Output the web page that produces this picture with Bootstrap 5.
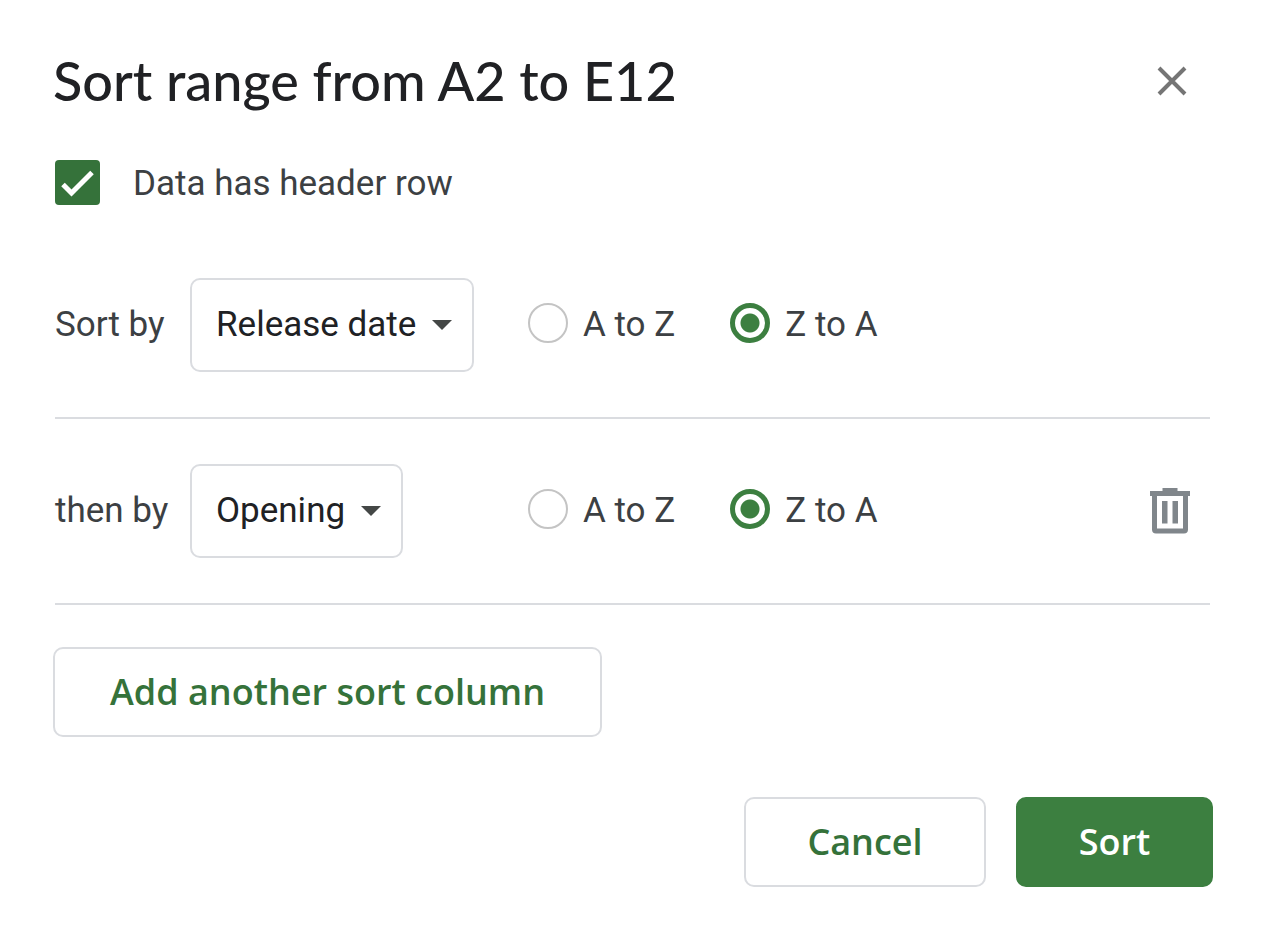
<!DOCTYPE html>
<html lang="en">
<head>
<meta charset="utf-8">
<meta name="viewport" content="width=device-width, initial-scale=1">
<title>Sort range</title>
<link rel="stylesheet" href="https://cdn.jsdelivr.net/npm/bootstrap@5.3.0/dist/css/bootstrap.min.css">
<style>
  :root { --green: #3c7f40; --green-text: #35723a; --line: #dadce0; --ink: #202124; --ink-soft: #3c4043; }
  body { background: #fff; color: var(--ink-soft); font-family: Roboto, sans-serif; font-size: 35px; line-height: 44px; }
  .sort-dialog { padding: 47px 51px 48px 53px; }
  .sort-title { font-family: Lato, sans-serif; font-size: 54px; line-height: 68px; font-weight: 500; color: var(--ink); }
  .icon-btn { padding: 0; border: 0; background: none; line-height: 0; }
  .close-btn { margin-right: 26px; }
  .inset { margin-left: 2px; margin-right: 3px; }
  .header-check { margin-top: 43px; margin-bottom: 27px; gap: 33px; }
  .form-check-input { margin: 0; flex: none; background-color: #fff; }
  .form-check-input + label { padding-top: 4px; }
  .header-check .form-check-input { width: 45px; height: 45px; border: 0; border-radius: 4px; }
  .header-check .form-check-input:checked {
    background-color: var(--green-text);
    background-size: 45px 45px;
    background-image: url("data:image/svg+xml,%3csvg xmlns='http://www.w3.org/2000/svg' viewBox='0 0 45 45'%3e%3cpath fill='none' stroke='%23fff' stroke-width='5' d='M8 24.500l8.500 8.500L37 12.500'/%3e%3c/svg%3e");
  }
  .sort-row { padding: 45px 0; border-bottom: 2px solid var(--line); }
  .row-label { width: 135px; }
  .select-cell { width: 338px; }
  .sort-select {
    height: 94px; padding: 0 20px 0 24px; border: 2px solid var(--line); border-radius: 10px;
    color: var(--ink); font-size: 35px; line-height: 44px;
    background-image: url("data:image/svg+xml,%3csvg xmlns='http://www.w3.org/2000/svg' viewBox='0 0 20 10'%3e%3cpath fill='%23444746' d='M0 0h20L10 10z'/%3e%3c/svg%3e");
    background-size: 20px 10px; background-position: right 20px center;
  }
  .select-wide { width: 284px; }
  .select-narrow { width: 213px; }
  .order-option { gap: 15px; }
  .order-options { gap: 55px; padding-bottom: 4px; }
  .order-option .form-check-input { width: 40px; height: 40px; border: 2px solid #c4c4c4; }
  .order-option .form-check-input:checked {
    border: 5px solid var(--green); background-color: #fff;
    background-image: radial-gradient(circle, var(--green) 9px, transparent 10px); background-size: 30px 30px;
  }
  .delete-btn { margin-right: 20px; }
  .action-btn {
    font-family: "Open Sans", sans-serif; font-size: 36px; line-height: 44px; font-weight: 600; height: 90px; padding: 0;
    border: 2px solid var(--line); border-radius: 10px; color: var(--green-text); background: #fff; white-space: nowrap;
  }
  .action-primary { background: var(--green); border-color: var(--green); color: #fff; }
  .btn-add { margin-top: 42px; width: 549px; }
  .dialog-footer { margin-top: 60px; gap: 30px; }
  .btn-cancel { width: 242px; }
  .btn-sort { width: 197px; }
</style>
</head>
<body>
<main class="sort-dialog" role="dialog" aria-labelledby="dialog-title">
  <header class="d-flex justify-content-between align-items-center">
    <h1 id="dialog-title" class="sort-title mb-0">Sort range from A2 to E12</h1>
    <button type="button" class="icon-btn close-btn" aria-label="Close">
      <svg width="30" height="30" viewBox="0 0 30 30" fill="none" stroke="#757575" stroke-width="4"><path d="M2 2l26 26M28 2l-26 26"/></svg>
    </button>
  </header>
  <form>
    <div class="header-check inset d-flex align-items-center">
      <input class="form-check-input" type="checkbox" id="has-header" checked>
      <label for="has-header">Data has header row</label>
    </div>

    <div class="sort-row inset d-flex align-items-center">
      <label class="row-label" for="first-column">Sort by</label>
      <div class="select-cell">
        <select id="first-column" class="form-select sort-select select-wide"><option>Release date</option></select>
      </div>
      <div class="order-options d-flex">
        <div class="order-option d-flex align-items-center"><input class="form-check-input" type="radio" name="order1" id="o1-az"><label for="o1-az">A to Z</label></div>
        <div class="order-option d-flex align-items-center"><input class="form-check-input" type="radio" name="order1" id="o1-za" checked><label for="o1-za">Z to A</label></div>
      </div>
    </div>

    <div class="sort-row inset d-flex align-items-center">
      <label class="row-label" for="second-column">then by</label>
      <div class="select-cell">
        <select id="second-column" class="form-select sort-select select-narrow"><option>Opening</option></select>
      </div>
      <div class="order-options d-flex">
        <div class="order-option d-flex align-items-center"><input class="form-check-input" type="radio" name="order2" id="o2-az"><label for="o2-az">A to Z</label></div>
        <div class="order-option d-flex align-items-center"><input class="form-check-input" type="radio" name="order2" id="o2-za" checked><label for="o2-za">Z to A</label></div>
      </div>
      <button type="button" class="icon-btn delete-btn ms-auto" aria-label="Delete sort column">
        <svg width="40" height="46" viewBox="0 0 40 46"><path fill="#80868b" fill-rule="evenodd" d="M12.500 0h15v3H40v5h-2v33.500q0 4-4 4H6q-4 0-4-4V8H0V3h12.500zM7 8v32.500h26V8zM12 13h5.500v22.500H12zM22.500 13H28v22.500h-5.500z"/></svg>
      </button>
    </div>

    <button type="button" class="btn action-btn btn-add">Add another sort column</button>

    <footer class="dialog-footer d-flex justify-content-end">
      <button type="button" class="btn action-btn btn-cancel">Cancel</button>
      <button type="submit" class="btn action-btn action-primary btn-sort">Sort</button>
    </footer>
  </form>
</main>
<script src="https://cdn.jsdelivr.net/npm/bootstrap@5.3.0/dist/js/bootstrap.bundle.min.js"></script>
</body>
</html>
